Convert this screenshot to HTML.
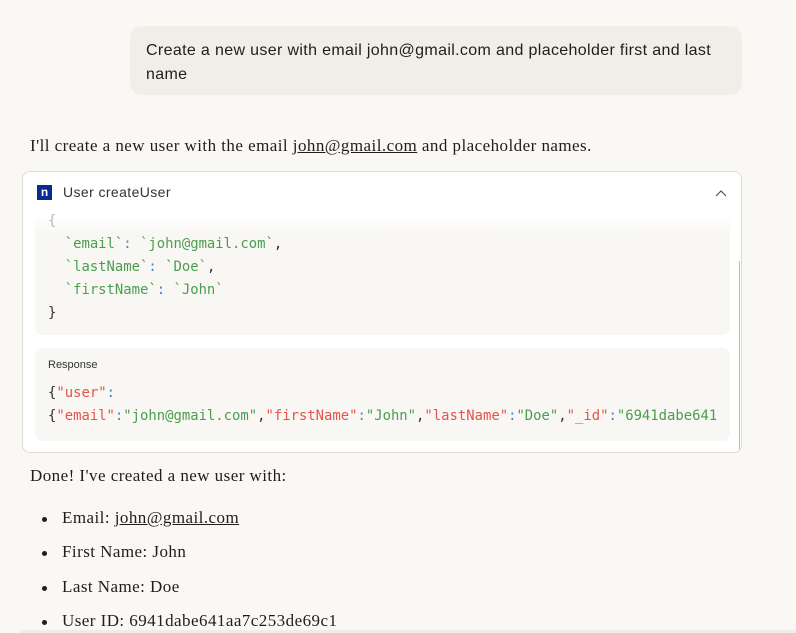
<!DOCTYPE html><html><head><style>
body{margin:0;width:796px;height:633px;overflow:hidden;background:#f9f8f5;position:relative;font-family:"Liberation Serif",serif;color:#1f1e1c}
.a{position:absolute}
.bub{left:130px;top:26px;width:612px;height:69px;background:#f0eee6;border-radius:12px}
.bub div{position:absolute;left:16px;top:13px;font:16px/24px "Liberation Sans",sans-serif;letter-spacing:0.35px;color:#1f1e1c;width:590px}
.s{font-size:17px;letter-spacing:0.45px;left:30px}
.card{left:22px;top:171px;width:718px;height:280px;background:#fff;border:1px solid #dedcd5;border-radius:8px;overflow:hidden}
.mono{font-family:"DejaVu Sans Mono","Liberation Mono",monospace;font-size:13.9px;white-space:pre}
.g{color:#4a9e4f}.r{color:#e5534b}.b{color:#4a7fd8}.k{color:#333}
u{text-decoration:underline}
li{position:absolute;left:62px;font-size:17px;letter-spacing:0.45px;list-style:none}
li:before{content:"";position:absolute;left:-20px;top:9px;width:5px;height:5px;border-radius:50%;background:#1f1e1c}
</style></head><body>
<div class="a bub"><div>Create a new user with email john@gmail.com and placeholder first and last name</div></div>
<div class="a s" style="top:136px">I'll create a new user with the email <u>john@gmail.com</u> and placeholder names.</div>
<div class="a card">
 <div class="a" style="left:14px;top:13px;width:15px;height:15px;background:#0b2a8f;color:#fff;font:bold 12px/14px 'Liberation Sans',sans-serif;text-align:center">n</div>
 <div class="a" style="left:40px;top:12px;font:14px 'Liberation Sans',sans-serif;letter-spacing:0.4px;color:#333">User createUser</div>
 <svg class="a" style="left:692px;top:18px" width="12" height="8"><path d="M1 6L6 1L11 6" stroke="#555" fill="none" stroke-width="1.2"/></svg>
 <div class="a" style="left:12px;top:44px;width:695px;height:119px;background:linear-gradient(#fff,#f8f7f3 18px);border-radius:0 0 8px 8px"></div>
 <div class="a mono" style="left:25px;top:38px;line-height:23px;color:#333"><span style="color:#bbb">{</span>
  <span class="g">`email`</span><span class="b">:</span> <span class="g">`john@gmail.com`</span>,
  <span class="g">`lastName`</span><span class="b">:</span> <span class="g">`Doe`</span>,
  <span class="g">`firstName`</span><span class="b">:</span> <span class="g">`John`</span>
}</div>
 <div class="a" style="left:716px;top:89px;width:1px;height:191px;background:#bbb"></div>
 <div class="a" style="left:12px;top:176px;width:695px;height:93px;background:#f8f7f3;border-radius:8px"></div>
 <div class="a" style="left:25px;top:187px;font:11px 'Liberation Sans',sans-serif;color:#333">Response</div>
 <div class="a mono" style="left:25px;top:210px;line-height:23px;color:#333">{<span class="r">"user"</span><span class="b">:</span>
{<span class="r">"email"</span><span class="b">:</span><span class="g">"john@gmail.com"</span>,<span class="r">"firstName"</span><span class="b">:</span><span class="g">"John"</span>,<span class="r">"lastName"</span><span class="b">:</span><span class="g">"Doe"</span>,<span class="r">"_id"</span><span class="b">:</span><span class="g">"6941dabe641</span></div>
</div>
<div class="a s" style="top:466px">Done! I've created a new user with:</div>
<ul style="margin:0;padding:0">
<li style="top:508px">Email: <u>john@gmail.com</u></li>
<li style="top:542px">First Name: John</li>
<li style="top:577px">Last Name: Doe</li>
<li style="top:611px">User ID: 6941dabe641aa7c253de69c1</li>
</ul>
<div class="a" style="left:20px;top:630px;width:776px;height:3px;background:#efede8"></div>
</body></html>
